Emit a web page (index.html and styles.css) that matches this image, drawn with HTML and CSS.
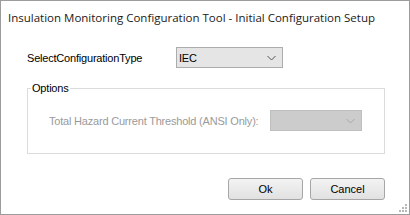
FILE: index.html
```html
<html lang="en">
    <head>
        <meta charset="UTF-8">
        <title>Initial Configuration Setup</title>
        <link rel="stylesheet" href="styles.css">
    </head>
    <body>
		<div class="window">
			<div class="title">Insulation Monitoring Configuration Tool - Initial Configuration Setup</div>
			<div class="content">
				<div class="row">
					<span class="label">SelectConfigurationType</span>
					<div class="combo">
						<span>IEC</span>
						<svg width="9" height="6" viewBox="0 0 9 6"><path d="M0.5 1 L4.5 5 L8.5 1" fill="none" stroke="#555" stroke-width="1"/></svg>
					</div>
				</div>
				<fieldset class="group">
					<legend>Options</legend>
					<div class="row inner">
						<span class="label disabled">Total Hazard Current Threshold (ANSI Only):</span>
						<div class="combo off">
							<svg width="9" height="6" viewBox="0 0 9 6"><path d="M0.5 1 L4.5 5 L8.5 1" fill="none" stroke="#a8a8a8" stroke-width="1"/></svg>
						</div>
					</div>
				</fieldset>
				<div class="buttons">
					<button>Ok</button>
					<button>Cancel</button>
				</div>
			</div>
			<div class="grip">
				<svg width="9" height="9" viewBox="0 0 9 9" fill="#b8b8b8">
					<rect x="7" y="1" width="2" height="2"/>
					<rect x="4" y="4" width="2" height="2"/><rect x="7" y="4" width="2" height="2"/>
					<rect x="1" y="7" width="2" height="2"/><rect x="4" y="7" width="2" height="2"/><rect x="7" y="7" width="2" height="2"/>
				</svg>
			</div>
		</div>
	</body>
</html>
```
FILE: styles.css
```css
body {
	margin: 0;
	font-family: "Liberation Sans", Arial, sans-serif;
	font-size: 11px;
	letter-spacing: -0.2px;
	color: #000;
}
div.window {
	position: relative;
	width: 410px;
	height: 215px;
	box-sizing: border-box;
	border: 1px solid #9c9c9c;
	background-color: white;
}
div.title {
	font-family: "Open Sans", "Liberation Sans", sans-serif;
	font-size: 11.5px;
	letter-spacing: 0;
	color: #1a1a1a;
	padding: 9px 0 0 7px;
	height: 37px;
	box-sizing: border-box;
}
div.content {
	padding: 9px 24px 0 26px;
}
div.row {
	display: flex;
	align-items: center;
}
span.label {
	width: 149px;
}
div.combo {
	width: 107px;
	height: 21px;
	box-sizing: border-box;
	border: 1px solid #acacac;
	background-color: #e5e5e5;
	display: flex;
	align-items: center;
	justify-content: space-between;
	padding: 0 6px 0 2px;
}
div.combo svg {
	margin-left: auto;
}
fieldset.group {
	margin: 14px 0 0 0;
	padding: 0;
	height: 72px;
	box-sizing: border-box;
	border: 1px solid #dcdcdc;
}
fieldset.group legend {
	margin-left: 3px;
	padding: 0 1px;
}
div.row.inner {
	margin: 16px 0 0 21px;
}
span.label.disabled {
	width: 221px;
	color: #9a9a9a;
}
div.combo.off {
	width: 92px;
	border-color: #bfbfbf;
	background-color: #cccccc;
}
div.buttons {
	display: flex;
	justify-content: flex-end;
	gap: 7px;
	margin-top: 24px;
}
button {
	width: 75px;
	height: 22px;
	font-family: "Liberation Sans", Arial, sans-serif;
	font-size: 11px;
	color: #000;
	border: 1px solid #a6a6a6;
	border-radius: 3px;
	background: linear-gradient(#f3f3f3, #e1e1e1);
	padding: 0;
}
div.grip {
	position: absolute;
	right: 2px;
	bottom: 2px;
	width: 9px;
	height: 9px;
	line-height: 0;
}
```
